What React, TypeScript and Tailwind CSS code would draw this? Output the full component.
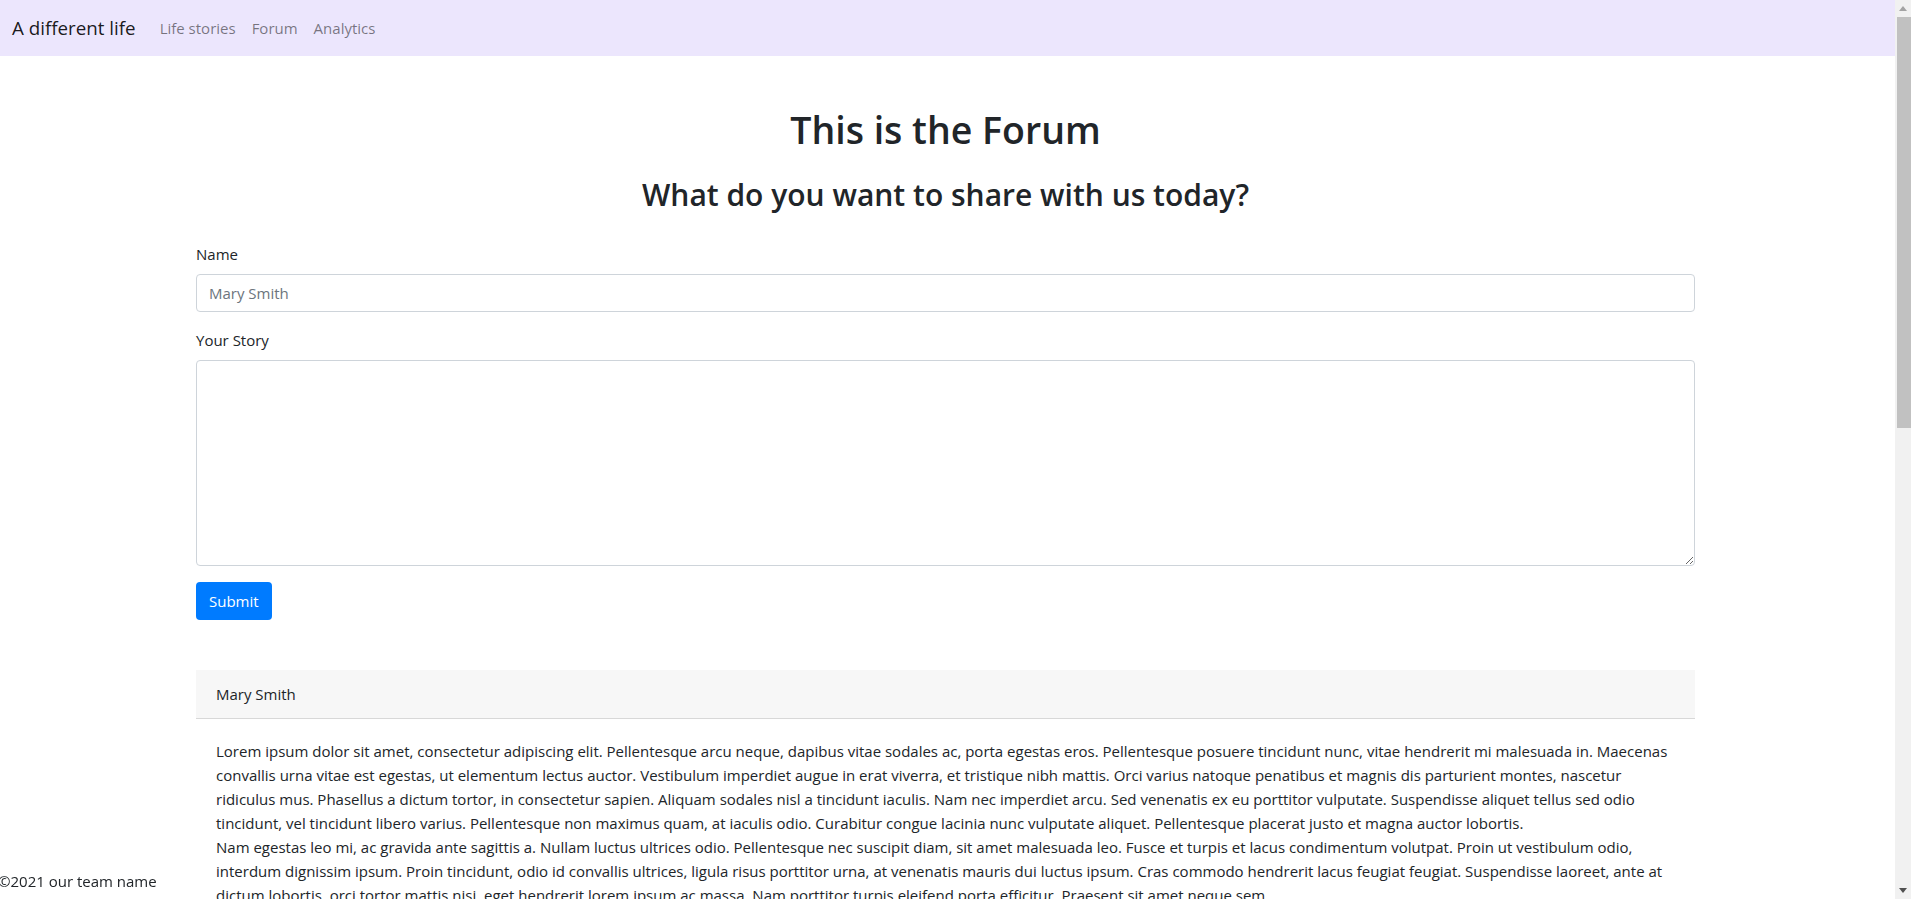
import React from "react";

const NAV_LINKS = ["Life stories", "Forum", "Analytics"];

// The story text, one entry per rendered line so it wraps like the original.
const STORY_LINES = [
  "Lorem ipsum dolor sit amet, consectetur adipiscing elit. Pellentesque arcu neque, dapibus vitae sodales ac, porta egestas eros. Pellentesque posuere tincidunt nunc, vitae hendrerit mi malesuada in. Maecenas",
  "convallis urna vitae est egestas, ut elementum lectus auctor. Vestibulum imperdiet augue in erat viverra, et tristique nibh mattis. Orci varius natoque penatibus et magnis dis parturient montes, nascetur",
  "ridiculus mus. Phasellus a dictum tortor, in consectetur sapien. Aliquam sodales nisl a tincidunt iaculis. Nam nec imperdiet arcu. Sed venenatis ex eu porttitor vulputate. Suspendisse aliquet tellus sed odio",
  "tincidunt, vel tincidunt libero varius. Pellentesque non maximus quam, at iaculis odio. Curabitur congue lacinia nunc vulputate aliquet. Pellentesque placerat justo et magna auctor lobortis.",
  "Nam egestas leo mi, ac gravida ante sagittis a. Nullam luctus ultrices odio. Pellentesque nec suscipit diam, sit amet malesuada leo. Fusce et turpis et lacus condimentum volutpat. Proin ut vestibulum odio,",
  "interdum dignissim ipsum. Proin tincidunt, odio id convallis ultrices, ligula risus porttitor urna, at venenatis mauris dui luctus ipsum. Cras commodo hendrerit lacus feugiat feugiat. Suspendisse laoreet, ante at",
  "dictum lobortis, orci tortor mattis nisi, eget hendrerit lorem ipsum ac massa. Nam porttitor turpis eleifend porta efficitur. Praesent sit amet neque sem.",
];

function Navbar() {
  return (
    <nav className="flex h-[56px] items-center bg-[#ece6fd] px-3">
      <a href="#" className="mr-4 py-[5px] text-[18.75px] leading-[30px] text-black/90">
        A different life
      </a>
      <ul className="flex">
        {NAV_LINKS.map((l) => (
          <li key={l}>
            <a href="#" className="block px-2 py-2 leading-6 text-black/50">
              {l}
            </a>
          </li>
        ))}
      </ul>
    </nav>
  );
}

function PostForm() {
  return (
    <form onSubmit={(e) => e.preventDefault()}>
      <div className="mb-4">
        <label className="mb-2 block leading-6">Name</label>
        <input
          type="text"
          placeholder="Mary Smith"
          className="block h-[38px] w-full rounded border border-[#ced4da] px-3 py-1.5 leading-6 placeholder:text-[#6c757d] focus:outline-none"
        />
      </div>
      <div className="mb-4">
        <label className="mb-2 block leading-6">Your Story</label>
        <textarea
          rows={8}
          className="block h-[206px] w-full rounded border border-[#ced4da] px-3 py-1.5 leading-6 focus:outline-none"
        />
      </div>
      <button
        type="submit"
        className="h-[38px] rounded bg-[#007bff] px-[13px] py-1.5 leading-6 text-white"
      >
        Submit
      </button>
    </form>
  );
}

function PostCard({ name, lines }: { name: string; lines: string[] }) {
  return (
    <div className="mt-[50px] rounded">
      <div className="border-b border-black/[0.125] bg-[#f7f7f7] px-5 py-3 leading-6">{name}</div>
      <div className="px-5 py-5 leading-6">
        {lines.map((line, i) => (
          <div key={i} className="whitespace-nowrap">
            {line}
          </div>
        ))}
      </div>
    </div>
  );
}

// Stand-in for the browser's vertical scrollbar seen in the screenshot.
function Scrollbar() {
  return (
    <div className="fixed top-0 right-0 flex h-full w-[16px] flex-col bg-[#f1f1f1]">
      <div className="flex h-[17px] items-center justify-center">
        <svg width="8" height="5" viewBox="0 0 8 5">
          <path d="M4 0L8 5H0z" fill="#a3a3a3" />
        </svg>
      </div>
      <div className="ml-[2px] h-[411px] w-[14px] bg-[#c1c1c1]" />
      <div className="flex-1" />
      <div className="flex h-[17px] items-center justify-center">
        <svg width="8" height="5" viewBox="0 0 8 5">
          <path d="M0 0H8L4 5z" fill="#505050" />
        </svg>
      </div>
    </div>
  );
}

export default function App() {
  return (
    <div
      className="min-h-[1880px] bg-white text-[15px] text-[#212529]"
      style={{ fontFamily: '"Open Sans", "Noto Sans", sans-serif' }}
    >
      <Navbar />
      <main className="ml-[196px] w-[1499px]">
        <h1 className="mt-[50px] text-center text-[37.5px] font-semibold leading-[48px]">This is the Forum</h1>
        <h2 className="mt-[22px] mb-[28px] text-center text-[30px] font-semibold leading-[38px]">
          What do you want to share with us today?
        </h2>
        <PostForm />
        <PostCard name="Mary Smith" lines={STORY_LINES} />
      </main>
      <footer className="fixed bottom-[6px] left-[-2px] leading-6">©2021 our team name</footer>
      <Scrollbar />
    </div>
  );
}
